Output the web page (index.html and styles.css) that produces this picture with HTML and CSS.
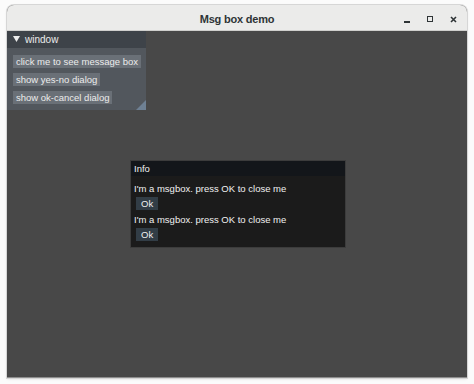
FILE: index.html
```html
<!DOCTYPE html>
<html>
<head>
<meta charset="utf-8">
<link rel="stylesheet" href="styles.css">
</head>
<body>
<div class="screen">
  <div class="app">
    <div class="headerbar">
      <div class="title">Msg box demo</div>
      <div class="controls">
        <span class="ctl min"></span>
        <span class="ctl max"></span>
        <svg class="ctl close" width="7" height="7" viewBox="0 0 7 7"><path d="M1 1L6 6M6 1L1 6" stroke="#2e3436" stroke-width="1.6"/></svg>
      </div>
    </div>
    <div class="canvas">
      <div class="gui-win">
        <div class="gui-title">
          <svg class="arrow" width="7" height="6" viewBox="0 0 7 6"><polygon points="0,0 7,0 3.5,6" fill="#ececec"/></svg>
          <span>window</span>
        </div>
        <div class="gui-body">
          <div class="gbtn">click me to see message box</div>
          <div class="gbtn">show yes-no dialog</div>
          <div class="gbtn">show ok-cancel dialog</div>
        </div>
        <div class="grip"></div>
      </div>
      <div class="popup">
        <div class="popup-title">Info</div>
        <div class="popup-body">
          <div class="ptext">I'm a msgbox. press OK to close me</div>
          <div class="pbtn">Ok</div>
          <div class="ptext second">I'm a msgbox. press OK to close me</div>
          <div class="pbtn">Ok</div>
        </div>
      </div>
    </div>
  </div>
</div>
</body>
</html>
```
FILE: styles.css
```css
html, body {
  margin: 0;
  padding: 0;
  background: #ffffff;
}
.screen {
  width: 474px;
  height: 384px;
  padding: 5px 7px 0 7px;
  box-sizing: border-box;
  background: #fbfbfb;
  font-family: "Liberation Sans", Arial, sans-serif;
}
.app {
  width: 460px;
  height: 373px;
  display: flex;
  flex-direction: column;
  border-radius: 7px 7px 0 0;
  box-shadow: 0 0 0 1px #d6d6d6, 0 1px 3px rgba(0,0,0,0.12);
  overflow: hidden;
  background: #484848;
}
.headerbar {
  height: 26px;
  flex: none;
  background: #ebebea;
  border-bottom: 1px solid #cfcfcd;
  box-sizing: border-box;
  position: relative;
  display: flex;
  align-items: center;
  justify-content: center;
}
.title {
  font-weight: bold;
  font-size: 11px;
  letter-spacing: -0.2px;
  color: #2e3436;
  margin-top: 2px;
}
.controls {
  position: absolute;
  right: 10px;
  top: 10px;
  display: flex;
  align-items: center;
  gap: 17px;
}
.ctl {
  display: block;
}
.min {
  width: 6px;
  height: 2px;
  background: #2e3436;
  margin-top: 6px;
}
.max {
  width: 4px;
  height: 4px;
  border: 1.5px solid #2e3436;
}
.canvas {
  flex: 1;
  position: relative;
  background: #484848;
  border-bottom: 1px solid #8e8e8e;
}
.gui-win {
  position: absolute;
  left: 0;
  top: 0;
  width: 139px;
  height: 79px;
  background: #52575d;
  display: flex;
  flex-direction: column;
}
.gui-title {
  height: 17px;
  background: #3e4349;
  display: flex;
  align-items: center;
  padding-left: 6px;
  gap: 5px;
  color: #ececec;
  font-size: 10px;
}
.arrow {
  margin-top: -1px;
}
.gui-body {
  padding: 7px 6px 0 6px;
  display: flex;
  flex-direction: column;
  align-items: flex-start;
  gap: 5px;
}
.gbtn {
  height: 13px;
  line-height: 13px;
  padding: 0 3px;
  background: #6a7077;
  color: #ececec;
  font-size: 9.5px;
  white-space: nowrap;
}
.grip {
  position: absolute;
  right: 0;
  bottom: 0;
  width: 0;
  height: 0;
  border-style: solid;
  border-width: 0 0 10px 10px;
  border-color: transparent transparent #6e8093 transparent;
}
.popup {
  position: absolute;
  left: 123px;
  top: 129px;
  width: 214px;
  height: 86px;
  background: #1b1b1b;
  border: 1px solid #3c3c3c;
  display: flex;
  flex-direction: column;
}
.popup-title {
  height: 15px;
  line-height: 15px;
  background: #13161a;
  color: #f0f0f0;
  font-size: 9.5px;
  padding-left: 3px;
}
.popup-body {
  padding: 7px 0 0 3px;
  display: flex;
  flex-direction: column;
  align-items: flex-start;
}
.ptext {
  height: 12px;
  line-height: 12px;
  font-size: 9.5px;
  color: #f0f0f0;
  white-space: nowrap;
}
.ptext.second {
  margin-top: 4px;
}
.pbtn {
  margin-top: 2px;
  margin-left: 2px;
  height: 13px;
  line-height: 13px;
  padding: 0 5px;
  background: #323d46;
  color: #f0f0f0;
  font-size: 9.5px;
}
```
